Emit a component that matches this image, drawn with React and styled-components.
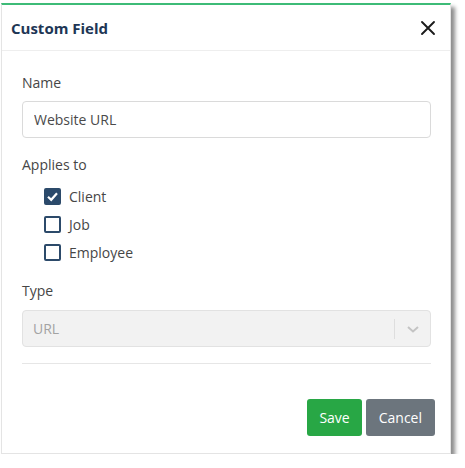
import React from 'react';
import styled, { createGlobalStyle } from 'styled-components';

const GlobalStyle = createGlobalStyle`
  body {
    margin: 0;
    background: #ffffff;
    font-family: "Open Sans", "Noto Sans", sans-serif;
  }
`;

const Modal = styled.div`
  margin: 3px 0 0 1px;
  width: 450px;
  background: #ffffff;
  border: 1px solid #e4e4e4;
  border-top: 2px solid #3dbb77;
  box-shadow: 4px 4px 4px rgba(0, 0, 0, 0.45);
  box-sizing: border-box;
`;

const Header = styled.div`
  height: 45px;
  display: flex;
  align-items: center;
  justify-content: space-between;
  padding: 0 14px 0 9px;
  border-bottom: 1px solid #eeeeee;
`;

const Title = styled.h1`
  margin: 0;
  font-size: 15px;
  font-weight: 700;
  color: #1e3655;
`;

const CloseButton = styled.button`
  border: none;
  background: none;
  padding: 0;
  width: 16px;
  height: 16px;
  display: flex;
  cursor: pointer;
`;

const Body = styled.div`
  padding: 22px 19px 0 20px;
`;

const Label = styled.div`
  font-size: 14px;
  line-height: 20px;
  color: #464646;
  margin-bottom: ${(p) => p.gap || 8}px;
`;

const Input = styled.input`
  display: block;
  width: 100%;
  height: 37px;
  box-sizing: border-box;
  border: 1px solid #dadada;
  border-radius: 4px;
  padding: 0 11px;
  font-family: inherit;
  font-size: 14px;
  color: #4a4a4a;
  margin-bottom: 17px;
  outline: none;
`;

const CheckList = styled.div`
  display: flex;
  flex-direction: column;
  padding-left: 22px;
  margin-bottom: 15px;
`;

const CheckRow = styled.label`
  display: flex;
  align-items: center;
  gap: 8px;
  height: 28px;
  font-size: 14px;
  color: #464646;
`;

const Box = styled.span`
  width: 17px;
  height: 17px;
  box-sizing: border-box;
  border: 2px solid #2c4a6a;
  border-radius: 2px;
  background: ${(p) => (p.checked ? '#2a496b' : '#ffffff')};
  display: flex;
  align-items: center;
  justify-content: center;
`;

const Select = styled.div`
  height: 37px;
  box-sizing: border-box;
  border: 1px solid #e2e2e2;
  border-radius: 4px;
  background: #f2f2f2;
  display: flex;
  align-items: center;
  font-size: 14px;
  color: #a3a3a3;
  padding-left: 10px;
`;

const SelectValue = styled.span`
  flex: 1;
`;

const Separator = styled.span`
  width: 1px;
  height: 20px;
  background: #dedede;
`;

const Chevron = styled.span`
  width: 35px;
  display: flex;
  justify-content: center;
`;

const Divider = styled.hr`
  border: none;
  border-top: 1px solid #e6e6e6;
  margin: 16px 0 0;
`;

const Footer = styled.div`
  display: flex;
  justify-content: flex-end;
  gap: 4px;
  padding: 35px 15px 17px 0;
  margin-right: -19px;
`;

const Button = styled.button`
  height: 37px;
  border: none;
  border-radius: 3px;
  padding: 0 ${(p) => p.pad}px;
  font-family: inherit;
  font-size: 14px;
  color: #ffffff;
  background: ${(p) => p.bg};
  cursor: pointer;
`;

export default function App() {
  return (
    <>
      <GlobalStyle />
      <Modal>
        <Header>
          <Title>Custom Field</Title>
          <CloseButton aria-label="Close">
            <svg width="16" height="16" viewBox="0 0 16 16">
              <path d="M2 2 L14 14 M14 2 L2 14" stroke="#1b1b1b" strokeWidth="1.9" strokeLinecap="round" />
            </svg>
          </CloseButton>
        </Header>
        <Body>
          <Label>Name</Label>
          <Input defaultValue="Website URL" />
          <Label gap={7}>Applies to</Label>
          <CheckList>
            <CheckRow>
              <Box checked>
                <svg width="13" height="13" viewBox="0 0 13 13">
                  <path d="M2 6.8 L5.2 9.8 L11 3.2" fill="none" stroke="#ffffff" strokeWidth="2.2" />
                </svg>
              </Box>
              Client
            </CheckRow>
            <CheckRow>
              <Box />
              Job
            </CheckRow>
            <CheckRow>
              <Box />
              Employee
            </CheckRow>
          </CheckList>
          <Label gap={9}>Type</Label>
          <Select>
            <SelectValue>URL</SelectValue>
            <Separator />
            <Chevron>
              <svg width="14" height="10" viewBox="0 0 14 10">
                <path d="M2 3 L7 7.5 L12 3" fill="none" stroke="#c4c4c4" strokeWidth="2" />
              </svg>
            </Chevron>
          </Select>
          <Divider />
          <Footer>
            <Button bg="#28a745" pad={12}>Save</Button>
            <Button bg="#6c757d" pad={13}>Cancel</Button>
          </Footer>
        </Body>
      </Modal>
    </>
  );
}
